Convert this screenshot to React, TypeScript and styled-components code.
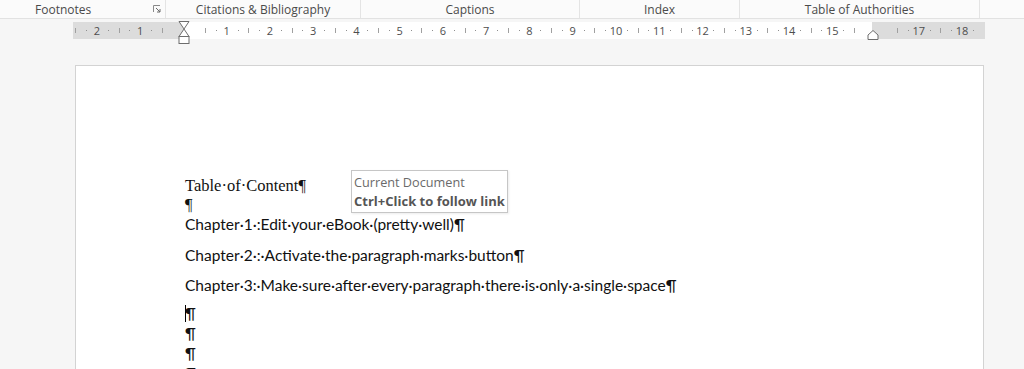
import styled, { createGlobalStyle } from 'styled-components';

const CM = 43.25;
const ORIGIN = 110.5;

const GlobalStyle = createGlobalStyle`
  html, body {
    margin: 0;
    padding: 0;
    height: 369px;
    overflow: hidden;
    background: #f6f6f6;
  }
`;

const Screen = styled.div`
  width: 1024px;
  height: 369px;
  overflow: hidden;
  display: flex;
  flex-direction: column;
  background: #f6f6f6;
`;

const GroupBar = styled.div`
  height: 18px;
  display: flex;
  background: #fbfbfb;
  border-bottom: 1px solid #e2e2e2;
  font-family: "Open Sans", "Noto Sans", sans-serif;
  font-size: 12px;
  color: #4a4a4a;
`;

const Group = styled.div<{ $w: number; $first?: boolean }>`
  width: ${(p) => p.$w}px;
  flex: none;
  position: relative;
  display: flex;
  align-items: center;
  justify-content: ${(p) => (p.$first ? 'flex-start' : 'center')};
  padding: 1px 0 0 ${(p) => (p.$first ? '35px' : '0')};
  box-sizing: border-box;
  border-right: 1px solid #e4e4e4;
  line-height: 18px;
  white-space: nowrap;
`;

const Launcher = styled.svg`
  position: absolute;
  right: 4px;
  top: 5px;
`;

const RulerRow = styled.div`
  height: 20px;
  padding: 3px 0 0 73px;
  box-sizing: border-box;
  display: flex;
`;

const Ruler = styled.div`
  position: relative;
  height: 17px;
  width: 912px;
  display: flex;
`;

const Margin = styled.div<{ $w: number }>`
  width: ${(p) => p.$w}px;
  flex: none;
  background: #dcdcdc;
`;

const Writable = styled.div`
  flex: 1;
  background: #ffffff;
`;

const Num = styled.span`
  position: absolute;
  top: 0;
  width: 20px;
  margin-left: -10px;
  text-align: center;
  line-height: 17px;
  font-family: "Open Sans", "Noto Sans", sans-serif;
  font-size: 11px;
  color: #4d4d4d;
`;

const Dot = styled.span`
  position: absolute;
  top: 8px;
  width: 1px;
  height: 1px;
  background: #8f8f8f;
`;

const Half = styled.span`
  position: absolute;
  top: 6px;
  width: 1px;
  height: 5px;
  background: #a0a0a0;
`;

const Marker = styled.svg`
  position: absolute;
  z-index: 2;
`;

const Canvas = styled.div`
  flex: 1;
  padding: 26px 0 0 75px;
  display: flex;
`;

const Page = styled.div`
  width: 909px;
  height: 400px;
  box-sizing: border-box;
  border: 1px solid #d3d3d3;
  background: #fff;
  padding: 110px 0 0 109px;
  display: flex;
  flex-direction: column;
  position: relative;
`;

const SerifLine = styled.div`
  font-family: "Liberation Serif", "Times New Roman", serif;
  font-size: 16.5px;
  line-height: 19px;
  height: 19px;
  color: #111;
  white-space: nowrap;
`;

const Mark = styled.span`
  color: #111;
`;

const BodyLine = styled.div<{ $after?: number }>`
  font-family: Lato, "Carlito", "Liberation Sans", sans-serif;
  font-size: 15.5px;
  line-height: 20px;
  height: 20px;
  margin-bottom: ${(p) => p.$after ?? 0}px;
  color: #111;
  white-space: nowrap;
  display: flex;
  align-items: center;
`;

const Caret = styled.span`
  display: inline-block;
  width: 1px;
  height: 17px;
  background: #000;
  margin-right: -1px;
`;

const Tip = styled.div`
  position: absolute;
  left: 275px;
  top: 104px;
  padding: 2px 2px 1px 2px;
  border: 1px solid #c6c6c6;
  background: #fff;
  box-shadow: 1px 1px 2px rgba(0, 0, 0, 0.08);
  font-family: "Open Sans", "Noto Sans", sans-serif;
  font-size: 12.7px;
  line-height: 19px;
  color: #6a6a6a;
  white-space: nowrap;
`;

const TipStrong = styled.div`
  font-weight: 700;
  font-size: 13px;
  color: #555;
`;

const groups = [
  { w: 166, label: 'Footnotes', first: true },
  { w: 195, label: 'Citations & Bibliography' },
  { w: 219, label: 'Captions' },
  { w: 160, label: 'Index' },
  { w: 240, label: 'Table of Authorities' },
];

function rulerMarks() {
  const out: JSX.Element[] = [];
  for (let q = -10; q <= 75; q++) {
    const v = q / 4;
    const x = ORIGIN + v * CM;
    if (x < 2 || x > 908) continue;
    if (Math.abs(v) < 0.3 || Math.abs(v - 16) < 0.3) continue;
    const r = ((q % 4) + 4) % 4;
    if (r === 0) out.push(<Num key={q} style={{ left: x }}>{Math.abs(v)}</Num>);
    else if (r === 2) out.push(<Half key={q} style={{ left: x }} />);
    else out.push(<Dot key={q} style={{ left: x }} />);
  }
  return out;
}

const pilcrow = '\u00b6';

export default function App() {
  return (
    <Screen>
      <GlobalStyle />
      <GroupBar>
        {groups.map((g) => (
          <Group key={g.label} $w={g.w} $first={g.first}>
            {g.label}
            {g.first && (
              <Launcher width="8" height="8" viewBox="0 0 8 8">
                <path d="M0.5 7V0.5H7" fill="none" stroke="#8a8a8a" strokeWidth="1" />
                <path d="M3 3L7 7M7 4V7H4" fill="none" stroke="#6a6a6a" strokeWidth="1" />
              </Launcher>
            )}
          </Group>
        ))}
      </GroupBar>
      <RulerRow>
        <Ruler>
          <Margin $w={110} />
          <Writable />
          <Margin $w={113} />
          {rulerMarks()}
          <Marker width="12" height="24" viewBox="0 0 12 24" style={{ left: 104.5, top: -1 }}>
            <path d="M1 0.5H11L6 8Z" fill="#fff" stroke="#6d6d6d" />
            <path d="M6 8L11 15.5H1Z" fill="#fff" stroke="#6d6d6d" />
            <rect x="1" y="15.5" width="10" height="7" fill="#fff" stroke="#6d6d6d" />
          </Marker>
          <Marker width="12" height="10" viewBox="0 0 12 10" style={{ left: 794, top: 8 }}>
            <path d="M1 9.5V5L6 0.5L11 5V9.5Z" fill="#fff" stroke="#6d6d6d" />
          </Marker>
        </Ruler>
      </RulerRow>
      <Canvas>
        <Page>
          <SerifLine>
            Table·of·Content<Mark>{pilcrow}</Mark>
          </SerifLine>
          <SerifLine>
            <Mark>{pilcrow}</Mark>
          </SerifLine>
          <BodyLine $after={10.5}>Chapter·1·:Edit·your·eBook·(pretty·well){pilcrow}</BodyLine>
          <BodyLine $after={10.5}>Chapter·2·:·Activate·the·paragraph·marks·button{pilcrow}</BodyLine>
          <BodyLine $after={8}>
            Chapter·3:·Make·sure·after·every·paragraph·there·is·only·a·single·space{pilcrow}
          </BodyLine>
          <BodyLine>
            <Caret />
            {pilcrow}
          </BodyLine>
          <BodyLine>{pilcrow}</BodyLine>
          <BodyLine>{pilcrow}</BodyLine>
          <BodyLine>{pilcrow}</BodyLine>
          <Tip>
            Current Document
            <TipStrong>Ctrl+Click to follow link</TipStrong>
          </Tip>
        </Page>
      </Canvas>
    </Screen>
  );
}
